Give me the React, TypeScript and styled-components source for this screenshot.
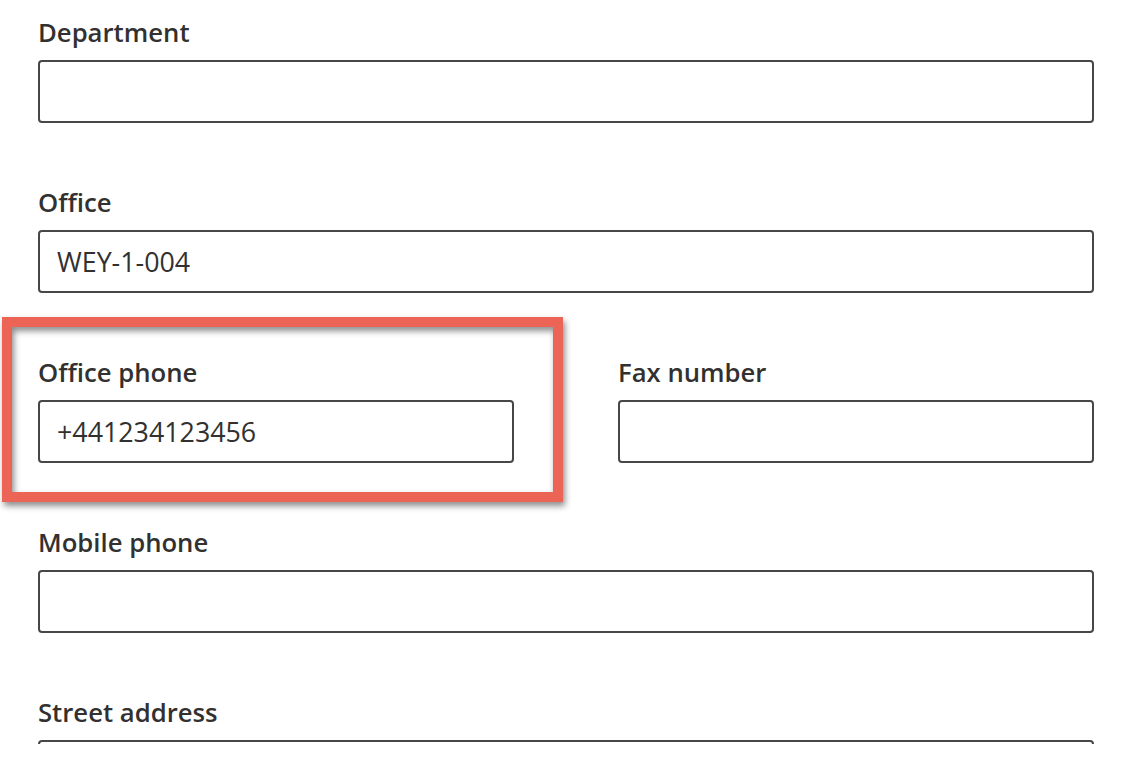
import React from "react";
import styled, { createGlobalStyle } from "styled-components";

const GlobalStyle = createGlobalStyle`
  html, body {
    margin: 0;
    padding: 0;
    background: #ffffff;
  }
  body {
    font-family: "Open Sans", "Noto Sans", "Liberation Sans", sans-serif;
    color: #323130;
  }
`;

const Page = styled.div`
  width: 1124px;
  height: 744px;
  overflow: hidden;
  box-sizing: border-box;
  padding: 15px 30px 0 38px;
  display: flex;
  flex-direction: column;
  gap: 62px;
`;

const Row = styled.div`
  display: grid;
  grid-template-columns: 476px 476px;
  column-gap: 104px;
`;

const Field = styled.div`
  position: relative;
  display: flex;
  flex-direction: column;
  gap: 9px;
`;

const Label = styled.label`
  font-size: 25.7px;
  font-weight: 600;
  line-height: 36px;
  height: 36px;
  color: #323130;
`;

const Input = styled.div`
  box-sizing: border-box;
  height: 63px;
  border: 2px solid #474747;
  border-radius: 4px;
  padding: 0 17px;
  display: flex;
  align-items: center;
  font-size: 26.8px;
  font-weight: 400;
  color: #323130;
  background: #fff;
`;

const Highlight = styled.div`
  position: absolute;
  left: -36px;
  top: -38px;
  width: 561px;
  height: 185px;
  box-sizing: border-box;
  border: 10px solid #ec6456;
  filter: drop-shadow(2px 4px 3px rgba(0, 0, 0, 0.45));
  pointer-events: none;
`;

type FieldProps = {
  label: string;
  value?: string;
  highlighted?: boolean;
};

const FormField: React.FC<FieldProps> = ({ label, value, highlighted }) => (
  <Field>
    <Label>{label}</Label>
    <Input>{value}</Input>
    {highlighted && <Highlight />}
  </Field>
);

export default function App() {
  return (
    <>
      <GlobalStyle />
      <Page>
        <FormField label="Department" />
        <FormField label="Office" value="WEY-1-004" />
        <Row>
          <FormField label="Office phone" value="+441234123456" highlighted />
          <FormField label="Fax number" />
        </Row>
        <FormField label="Mobile phone" />
        <FormField label="Street address" />
      </Page>
    </>
  );
}
